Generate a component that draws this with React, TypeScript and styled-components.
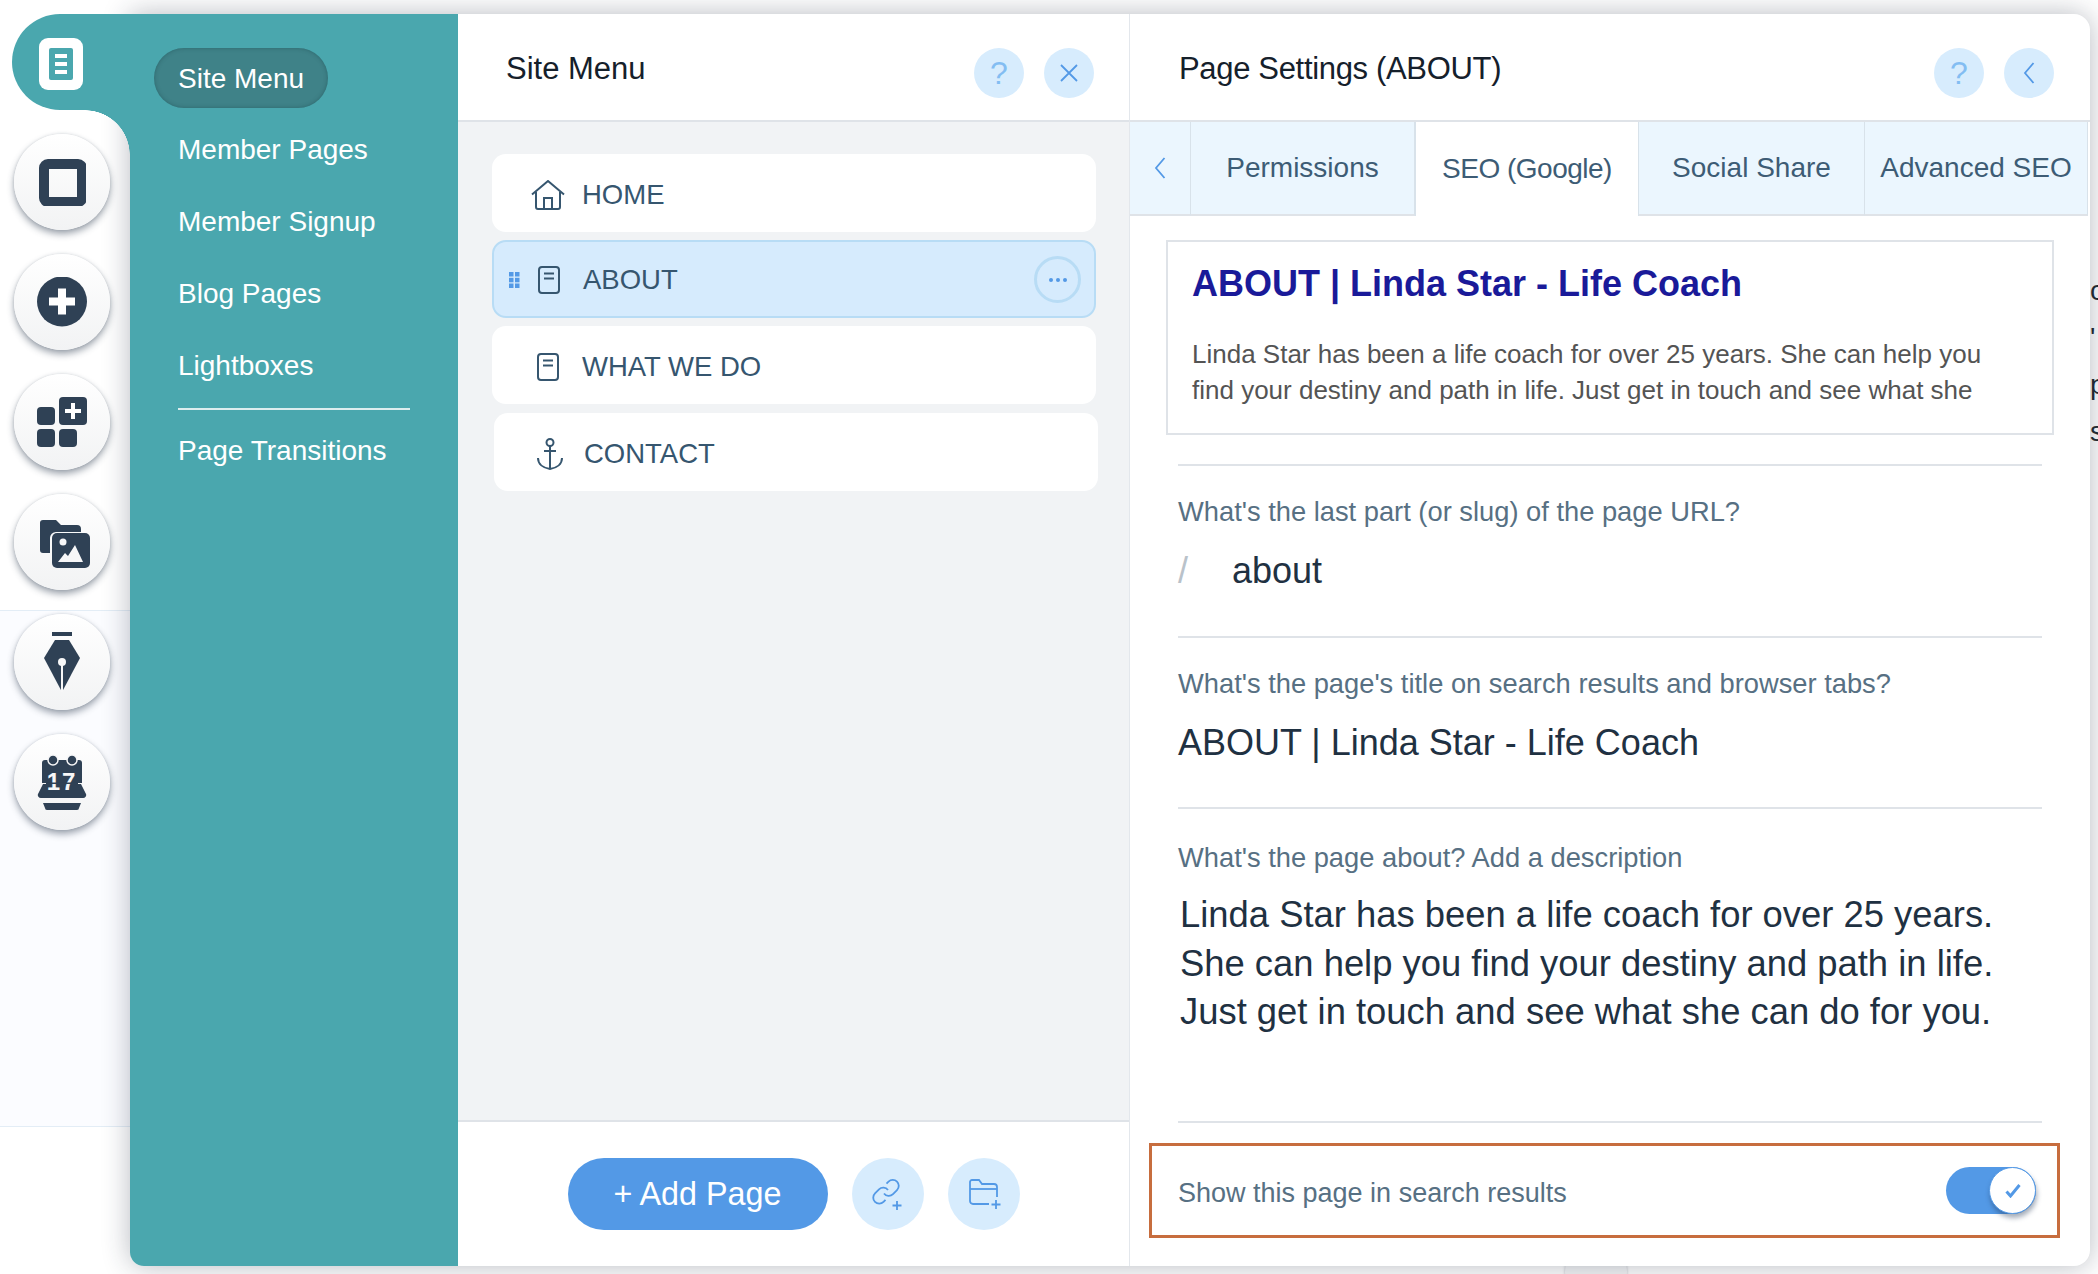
import styled, { createGlobalStyle } from 'styled-components';

const TEAL = '#4aa7ae';
const NAVY = '#2f4155';
const BLUE = '#5399e6';
const PALE = '#d7ecfd';
const LINE = '#dfe3e8';

const GlobalStyle = createGlobalStyle`
  html, body {
    margin: 0;
    padding: 0;
    background: #fff;
  }
  body {
    font-family: "Liberation Sans", Arial, sans-serif;
  }
`;

const Root = styled.div`
  display: flex;
  position: relative;
  isolation: isolate;
  width: 2098px;
  height: 1274px;
  overflow: hidden;
`;

const Rail = styled.nav`
  flex: 0 0 130px;
  display: flex;
  flex-direction: column;
  align-items: flex-start;
  background: linear-gradient(
    to bottom,
    #fff 0 610px,
    #e3edf6 610px 611px,
    #fbfcff 611px 1126px,
    #e3edf6 1126px 1127px,
    #fff 1127px
  );
`;

const LogoTab = styled.div`
  position: relative;
  z-index: 2;
  display: flex;
  align-items: center;
  box-sizing: border-box;
  width: 118px;
  height: 96px;
  margin: 14px 0 24px 12px;
  padding: 4px 0 0 27px;
  background: ${TEAL};
  border-radius: 48px 0 0 48px;

  &::after {
    content: '';
    position: absolute;
    top: 96px;
    right: 0;
    width: 45px;
    height: 45px;
    background: radial-gradient(circle at 0 100%, transparent 44.5px, ${TEAL} 45px);
  }
`;

const RailButtons = styled.div`
  display: flex;
  flex-direction: column;
  gap: 24px;
  margin-left: 14px;
`;

const RailButton = styled.button`
  position: relative;
  z-index: 1;
  display: flex;
  align-items: center;
  justify-content: center;
  width: 96px;
  height: 96px;
  padding: 0;
  border: 0;
  border-radius: 50%;
  background: linear-gradient(to bottom, #fff, #f2f3f4);
  box-shadow: 0 4px 7px rgba(40, 55, 75, 0.45), 0 0 3px rgba(40, 55, 75, 0.15);
`;

const Window = styled.main`
  flex: 0 0 1960px;
  display: flex;
  height: 1252px;
  margin-top: 14px;
  background: #fff;
  border-radius: 0 16px 16px 14px;
  box-shadow: 0 0 28px rgba(30, 40, 60, 0.32);
`;

const Sidebar = styled.aside`
  flex: 0 0 328px;
  box-sizing: border-box;
  padding: 34px 24px 0;
  background: ${TEAL};
  border-radius: 0 0 0 14px;
`;

const SideItem = styled.div<{ $active?: boolean }>`
  display: flex;
  align-items: center;
  width: fit-content;
  box-sizing: border-box;
  height: ${p => (p.$active ? '60px' : '72px')};
  margin-bottom: ${p => (p.$active ? '6px' : '0')};
  padding: ${p => (p.$active ? '2px' : '0')} 24px 0;
  font-size: 28px;
  color: #fff;
  border-radius: 30px;
  background: ${p => (p.$active ? '#3f8288' : 'transparent')};
  box-shadow: ${p => (p.$active ? 'inset 0 0 4px rgba(20, 60, 65, 0.4)' : 'none')};
`;

const SideRule = styled.div`
  width: 232px;
  height: 2px;
  margin: 6px 0 5px 24px;
  background: #dcedee;
`;

const MenuPanel = styled.section`
  flex: 0 0 672px;
  display: flex;
  flex-direction: column;
  box-sizing: border-box;
  border-right: 1px solid #e3e7ec;
`;

const PanelHeader = styled.header<{ $left: number; $right: number }>`
  flex: 0 0 108px;
  display: flex;
  align-items: flex-start;
  justify-content: space-between;
  box-sizing: border-box;
  padding: 34px ${p => p.$right}px 0 ${p => p.$left}px;
  border-bottom: 2px solid ${LINE};
`;

const PanelTitle = styled.h2<{ $tight?: boolean }>`
  margin: -4px 0 0;
  font-size: 31px;
  line-height: 50px;
  font-weight: 400;
  letter-spacing: ${p => (p.$tight ? '-0.33px' : '0')};
  color: #15202b;
`;

const HeaderActions = styled.div`
  display: flex;
  gap: 20px;
`;

const RoundButton = styled.button<{ $size?: number }>`
  display: flex;
  align-items: center;
  justify-content: center;
  width: ${p => p.$size ?? 50}px;
  height: ${p => p.$size ?? 50}px;
  padding: 0;
  border: 0;
  border-radius: 50%;
  background: ${PALE};
  color: ${BLUE};
  font-family: "Liberation Sans", Arial, sans-serif;
`;

const HelpMark = styled.span`
  font-size: 32px;
  line-height: 1;
  color: #83bdf2;
`;

const PageList = styled.div`
  flex: 1;
  display: flex;
  flex-direction: column;
  gap: 8px;
  padding: 32px 33px 0 34px;
  background: #f1f3f5;
`;

const PageRow = styled.div<{ $selected?: boolean; $shift?: boolean }>`
  display: flex;
  align-items: center;
  box-sizing: border-box;
  height: 78px;
  margin: ${p => (p.$shift ? '1px -2px 0 2px' : '0')};
  padding: ${p => (p.$selected ? '1px 13px 0 16px' : '3px 13px 0 18px')};
  background: ${p => (p.$selected ? '#d6ebfd' : '#fff')};
  border: ${p => (p.$selected ? '2px solid #b8dcf5' : '0')};
  border-radius: 14px;
`;

const DragSlot = styled.div`
  flex: 0 0 10px;
  margin-left: -1px;
  display: flex;
`;

const IconSlot = styled.div`
  flex: 0 0 58px;
  display: flex;
  justify-content: center;
  color: #36566f;
`;

const PageName = styled.span`
  flex: 1;
  margin-left: 5px;
  font-size: 27.5px;
  color: #36566f;
`;

const DotsButton = styled.button`
  display: flex;
  align-items: center;
  justify-content: center;
  gap: 3px;
  box-sizing: border-box;
  width: 47px;
  height: 47px;
  padding: 0;
  background: transparent;
  border: 3px solid #b8dcf5;
  border-radius: 50%;
`;

const Dot = styled.i`
  width: 4px;
  height: 4px;
  border-radius: 50%;
  background: ${BLUE};
`;

const MenuFooter = styled.footer`
  flex: 0 0 146px;
  display: flex;
  align-items: center;
  justify-content: center;
  gap: 24px;
  box-sizing: border-box;
  background: #fff;
  border-top: 2px solid ${LINE};
`;

const AddPage = styled.button`
  width: 260px;
  height: 72px;
  padding: 0;
  border: 0;
  border-radius: 36px;
  background: ${BLUE};
  color: #fff;
  font-family: "Liberation Sans", Arial, sans-serif;
  font-size: 32.3px;
`;

const SettingsPanel = styled.section`
  flex: 1;
  display: flex;
  flex-direction: column;
  min-width: 0;
`;

const Tabs = styled.div`
  flex: 0 0 94px;
  display: flex;
  padding-right: 2px;
`;

const Tab = styled.div<{ $active?: boolean; $width?: number }>`
  flex: ${p => (p.$width ? `0 0 ${p.$width}px` : '1')};
  display: flex;
  align-items: center;
  justify-content: center;
  box-sizing: border-box;
  font-size: 28px;
  letter-spacing: ${p => (p.$active ? '-0.5px' : '0')};
  white-space: nowrap;
  color: #3d5c75;
  background: ${p => (p.$active ? '#fff' : '#ebf6fe')};
  border-right: 1px solid #d8e2ea;
  border-bottom: ${p => (p.$active ? '0' : `2px solid ${LINE}`)};
  border-left: ${p => (p.$active ? `1px solid #d8e2ea` : '0')};
`;

const SerpCard = styled.div`
  box-sizing: border-box;
  width: 888px;
  height: 195px;
  margin: 24px 0 29px 36px;
  padding: 20px 24px 0;
  border: 2px solid ${LINE};
`;

const SerpTitle = styled.div`
  font-size: 36px;
  line-height: 44px;
  font-weight: 700;
  white-space: nowrap;
  color: #1a1a99;
`;

const SerpText = styled.div`
  margin-top: 30px;
  font-size: 26px;
  line-height: 36px;
  white-space: nowrap;
  color: #545454;
`;

const Section = styled.div<{ $height: number; $top?: number }>`
  box-sizing: border-box;
  height: ${p => p.$height}px;
  margin: 0 48px;
  padding-top: ${p => p.$top ?? 29}px;
  border-top: 2px solid ${LINE};
`;

const SectionEnd = styled.div`
  height: 2px;
  margin: 0 48px;
  background: ${LINE};
`;

const FieldLabel = styled.div`
  font-size: 27.3px;
  line-height: 34px;
  white-space: nowrap;
  color: #577083;
`;

const FieldValue = styled.div`
  display: flex;
  margin-top: 20px;
  font-size: 36px;
  line-height: 44px;
  white-space: nowrap;
  color: #1f3142;
`;

const Slash = styled.span`
  width: 54px;
  color: #b9c2ca;
`;

const Description = styled.div`
  margin: 16px 0 0 2px;
  font-size: 36.4px;
  line-height: 48.5px;
  white-space: nowrap;
  color: #1f3142;
`;

const SearchToggleRow = styled.div`
  display: flex;
  align-items: center;
  justify-content: space-between;
  box-sizing: border-box;
  height: 95px;
  margin: 20px 30px 0 19px;
  padding: 0 21px 0 26px;
  border: 3px solid #c76d3e;
`;

const ToggleLabel = styled.span`
  margin-top: 5px;
  font-size: 27px;
  color: #577083;
`;

const ToggleTrack = styled.div`
  display: flex;
  justify-content: flex-end;
  width: 90px;
  height: 47px;
  border-radius: 24px;
  background: ${BLUE};
`;

const ToggleKnob = styled.div`
  display: flex;
  align-items: center;
  justify-content: center;
  box-sizing: border-box;
  width: 47px;
  height: 47px;
  background: #fff;
  border: 1px solid ${BLUE};
  border-radius: 50%;
  box-shadow: 1px 4px 5px rgba(30, 50, 80, 0.4);
`;

const EdgeStrip = styled.div`
  flex: 1;
  min-width: 0;
  overflow: hidden;
  padding-top: 267px;
  font-size: 28px;
  line-height: 47px;
  color: #1f2a33;
`;

const PeekHandle = styled.div`
  position: absolute;
  z-index: -1;
  left: 1565px;
  top: 1240px;
  width: 62px;
  height: 62px;
  border-radius: 50%;
  background: #f4f5f6;
  box-shadow: 0 0 3px rgba(30, 40, 60, 0.3);
`;

const LogoIcon = () => (
  <svg width="44" height="52" viewBox="0 0 44 52">
    <rect width="44" height="52" rx="9" fill="#fff" />
    <rect x="10" y="10" width="24" height="32" rx="2" fill={TEAL} />
    <path d="M16 16h12v4H16zM16 24h12v4H16zM16 32h12v4H16z" fill="#fff" />
  </svg>
);

const SquareIcon = () => (
  <svg width="48" height="48" viewBox="-1 -1 48 48">
    <rect x="5" y="5" width="38" height="38" rx="4" fill="none" stroke={NAVY} strokeWidth="10" />
  </svg>
);

const PlusIcon = () => (
  <svg width="50" height="50" viewBox="0 1 50 50">
    <circle cx="25" cy="25.500" r="25" fill={NAVY} />
    <path d="M21 12.500h8v9h9v8h-9v9h-8v-9h-9v-8h9z" fill="#fff" />
  </svg>
);

const AppsIcon = () => (
  <svg width="50" height="50" viewBox="0 0 50 50">
    <rect x="0" y="10" width="18" height="18" rx="4" fill={NAVY} />
    <rect x="0" y="32" width="18" height="18" rx="4" fill={NAVY} />
    <rect x="22" y="32" width="18" height="18" rx="4" fill={NAVY} />
    <rect x="22" y="0" width="28" height="28" rx="4" fill={NAVY} />
    <path d="M34 6h4v6h6v4h-6v6h-4v-6h-6v-4h6z" fill="#fff" />
  </svg>
);

const MediaIcon = () => (
  <svg width="56" height="52" viewBox="-6 -4 56 52">
    <path d="M3 0h13l5 5h16a4 4 0 0 1 4 4v3H16a6 6 0 0 0-6 6v15H3a3 3 0 0 1-3-3V3a3 3 0 0 1 3-3z" fill={NAVY} />
    <rect x="12" y="13" width="38" height="35" rx="5" fill="#f7f7f8" />
    <rect x="12" y="13" width="38" height="35" rx="5" fill={NAVY} />
    <circle cx="23" cy="22" r="3.500" fill="#f7f7f8" />
    <path d="M18 42l7-9 3 3 7-11 8 17z" fill="#f7f7f8" />
  </svg>
);

const PenIcon = () => (
  <svg width="36" height="60" viewBox="0 0 36 60">
    <rect x="8" y="0" width="20" height="4" fill={NAVY} />
    <path d="M11 8h14l11 18-18 34L0 26z" fill={NAVY} />
    <circle cx="18" cy="30" r="4" fill="#f7f7f8" />
    <rect x="17" y="30" width="2" height="30" fill="#f7f7f8" />
  </svg>
);

const CalendarIcon = () => (
  <svg width="50" height="56" viewBox="-1 0 50 56">
    <path d="M7 6h34a3 3 0 0 1 3 3v20H4V9a3 3 0 0 1 3-3z" fill={NAVY} />
    <path d="M5 30h38l5 10a3 3 0 0 1-3 4H3a3 3 0 0 1-3-4z" fill={NAVY} />
    <circle cx="15" cy="6" r="5" fill={NAVY} stroke="#f7f7f8" strokeWidth="1.500" />
    <circle cx="34" cy="6" r="5" fill={NAVY} stroke="#f7f7f8" strokeWidth="1.500" />
    <path d="M5 49h38l-2 5a2 2 0 0 1-2 2H9a2 2 0 0 1-2-2z" fill={NAVY} />
    <text x="24" y="36" textAnchor="middle" fontFamily="Liberation Sans" fontWeight="700" fontSize="24" letterSpacing="2" fill="#f7f7f8">17</text>
    <rect x="8" y="28.500" width="32" height="1.500" fill={NAVY} />
  </svg>
);

const HomeIcon = () => (
  <svg width="34" height="30" viewBox="0 0 34 30" fill="none" stroke="currentColor" strokeWidth="2">
    <path d="M1 14.500L17 1l16 13.500" />
    <path d="M5 12v15a2 2 0 0 0 2 2h20a2 2 0 0 0 2-2V12" />
    <path d="M13 29V18h8v11" />
  </svg>
);

const PageIcon = () => (
  <svg width="22" height="28" viewBox="0 0 22 28" fill="none" stroke="currentColor" strokeWidth="2">
    <rect x="1" y="1" width="20" height="26" rx="3" />
    <path d="M6 7.500h10M6 12.500h10" />
  </svg>
);

const AnchorIcon = () => (
  <svg width="26" height="32" viewBox="0 0 26 32" fill="none" stroke="currentColor" strokeWidth="2">
    <circle cx="13" cy="4.500" r="3.500" />
    <path d="M13 8v23M7 13h12" />
    <path d="M1 20c0 6 5 10 12 11 7-1 12-5 12-11" />
  </svg>
);

const GripIcon = () => (
  <svg width="11" height="16" viewBox="0 0 11 16" fill={BLUE}>
    <rect x="0" y="0" width="4.500" height="4.500" />
    <rect x="6" y="0" width="4.500" height="4.500" />
    <rect x="0" y="5.800" width="4.500" height="4.500" />
    <rect x="6" y="5.800" width="4.500" height="4.500" />
    <rect x="0" y="11.500" width="4.500" height="4.500" />
    <rect x="6" y="11.500" width="4.500" height="4.500" />
  </svg>
);

const CloseIcon = () => (
  <svg width="20" height="20" viewBox="0 0 20 20" fill="none" stroke="currentColor" strokeWidth="1.800">
    <path d="M2 2l16 16M18 2L2 18" />
  </svg>
);

const ChevronIcon = () => (
  <svg width="12" height="22" viewBox="0 0 12 22" fill="none" stroke={BLUE} strokeWidth="1.800">
    <path d="M10.500 1L2 11l8.500 10" />
  </svg>
);

const LinkPlusIcon = () => (
  <svg width="32" height="32" viewBox="0 0 32 32" fill="none" stroke="currentColor" strokeWidth="1.800">
    <path d="M12 15.500a6 6 0 0 0 9 .6l4-4a6 6 0 0 0-8.500-8.500l-2 2" />
    <path d="M16 12a6 6 0 0 0-9-.6l-4 4a6 6 0 0 0 8.500 8.500l2-2" />
    <path d="M25 23v9M20.500 27.500h9" />
  </svg>
);

const FolderPlusIcon = () => (
  <svg width="34" height="30" viewBox="-2 0 34 30" fill="none" stroke="currentColor" strokeWidth="1.800">
    <path d="M20 25H4a3 3 0 0 1-3-3V3a2 2 0 0 1 2-2h7l3 4h12a3 3 0 0 1 3 3v10" />
    <path d="M1 10h27" />
    <path d="M27 21v9M22.500 25.500h9" />
  </svg>
);

const CheckIcon = () => (
  <svg width="16" height="14" viewBox="0 0 16 14" fill="none" stroke={BLUE} strokeWidth="3">
    <path d="M1.500 7.500l4 4.500L14.500 1" />
  </svg>
);

const App = () => {
  return (
    <Root>
      <GlobalStyle />
      <Rail>
        <LogoTab>
          <LogoIcon />
        </LogoTab>
        <RailButtons>
          <RailButton><SquareIcon /></RailButton>
          <RailButton><PlusIcon /></RailButton>
          <RailButton><AppsIcon /></RailButton>
          <RailButton><MediaIcon /></RailButton>
          <RailButton><PenIcon /></RailButton>
          <RailButton><CalendarIcon /></RailButton>
        </RailButtons>
      </Rail>
      <Window>
        <Sidebar>
          <SideItem $active>Site Menu</SideItem>
          <SideItem>Member Pages</SideItem>
          <SideItem>Member Signup</SideItem>
          <SideItem>Blog Pages</SideItem>
          <SideItem>Lightboxes</SideItem>
          <SideRule />
          <SideItem>Page Transitions</SideItem>
        </Sidebar>
        <MenuPanel>
          <PanelHeader $left={48} $right={35}>
            <PanelTitle>Site Menu</PanelTitle>
            <HeaderActions>
              <RoundButton><HelpMark>?</HelpMark></RoundButton>
              <RoundButton><CloseIcon /></RoundButton>
            </HeaderActions>
          </PanelHeader>
          <PageList>
            <PageRow>
              <DragSlot />
              <IconSlot><HomeIcon /></IconSlot>
              <PageName>HOME</PageName>
            </PageRow>
            <PageRow $selected>
              <DragSlot><GripIcon /></DragSlot>
              <IconSlot><PageIcon /></IconSlot>
              <PageName>ABOUT</PageName>
              <DotsButton><Dot /><Dot /><Dot /></DotsButton>
            </PageRow>
            <PageRow>
              <DragSlot />
              <IconSlot><PageIcon /></IconSlot>
              <PageName>WHAT WE DO</PageName>
            </PageRow>
            <PageRow $shift>
              <DragSlot />
              <IconSlot><AnchorIcon /></IconSlot>
              <PageName>CONTACT</PageName>
            </PageRow>
          </PageList>
          <MenuFooter>
            <AddPage>+ Add Page</AddPage>
            <RoundButton $size={72}><LinkPlusIcon /></RoundButton>
            <RoundButton $size={72}><FolderPlusIcon /></RoundButton>
          </MenuFooter>
        </MenuPanel>
        <SettingsPanel>
          <PanelHeader $left={49} $right={36}>
            <PanelTitle $tight>Page Settings (ABOUT)</PanelTitle>
            <HeaderActions>
              <RoundButton><HelpMark>?</HelpMark></RoundButton>
              <RoundButton><ChevronIcon /></RoundButton>
            </HeaderActions>
          </PanelHeader>
          <Tabs>
            <Tab $width={61}><ChevronIcon /></Tab>
            <Tab $width={224}>Permissions</Tab>
            <Tab $width={224} $active>SEO (Google)</Tab>
            <Tab $width={226}>Social Share</Tab>
            <Tab>Advanced SEO</Tab>
          </Tabs>
          <SerpCard>
            <SerpTitle>ABOUT | Linda Star - Life Coach</SerpTitle>
            <SerpText>
              Linda Star has been a life coach for over 25 years. She can help you
              <br />
              find your destiny and path in life. Just get in touch and see what she
            </SerpText>
          </SerpCard>
          <Section $height={172}>
            <FieldLabel>What's the last part (or slug) of the page URL?</FieldLabel>
            <FieldValue><Slash>/</Slash>about</FieldValue>
          </Section>
          <Section $height={171}>
            <FieldLabel>What's the page's title on search results and browser tabs?</FieldLabel>
            <FieldValue>ABOUT | Linda Star - Life Coach</FieldValue>
          </Section>
          <Section $height={314} $top={32}>
            <FieldLabel>What's the page about? Add a description</FieldLabel>
            <Description>
              Linda Star has been a life coach for over 25 years.
              <br />
              She can help you find your destiny and path in life.
              <br />
              Just get in touch and see what she can do for you.
            </Description>
          </Section>
          <SectionEnd />
          <SearchToggleRow>
            <ToggleLabel>Show this page in search results</ToggleLabel>
            <ToggleTrack>
              <ToggleKnob><CheckIcon /></ToggleKnob>
            </ToggleTrack>
          </SearchToggleRow>
        </SettingsPanel>
      </Window>
      <EdgeStrip>
        c<br />'<br />p<br />s
      </EdgeStrip>
      <PeekHandle />
    </Root>
  );
};

export default App;
